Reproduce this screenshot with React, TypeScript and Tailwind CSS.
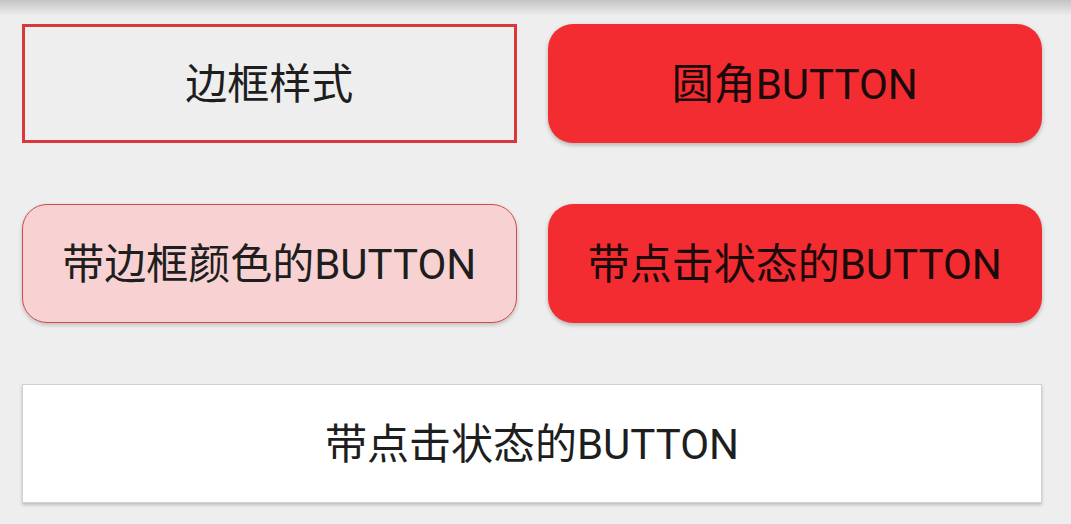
import React from "react";

const font = { fontFamily: 'Roboto, "Noto Sans CJK SC", sans-serif' };

export default function App() {
  return (
    <div
      className="relative w-[1071px] h-[524px] overflow-hidden bg-[#eeeeee] text-[#1e1e1e]"
      style={font}
    >
      <div className="absolute left-0 top-0 w-full h-[16px] bg-gradient-to-b from-[#c4c4c4] to-[#eeeeee]" />
      <div className="relative grid grid-cols-2 gap-x-[31px] gap-y-[61px] pl-[22px] pr-[29px] pt-[24px]">
        <div className="h-[119px] flex items-center justify-center border-[3px] border-[#d9383a] text-[42px] leading-none pt-[2px]">
          边框样式
        </div>
        <div className="h-[119px] flex items-center justify-center rounded-[25px] bg-[#f22c30] shadow-[0_2px_4px_rgba(0,0,0,0.25)] text-[42px] leading-none pt-[2px] text-[#1a0a0a]">
          圆角BUTTON
        </div>
        <div className="h-[119px] flex items-center justify-center rounded-[25px] bg-[#f8d2d3] border border-[#cf4a50] shadow-[0_2px_4px_rgba(0,0,0,0.2)] text-[42px] leading-none pt-[2px]">
          带边框颜色的BUTTON
        </div>
        <div className="h-[119px] flex items-center justify-center rounded-[25px] bg-[#f22c30] shadow-[0_2px_4px_rgba(0,0,0,0.25)] text-[42px] leading-none pt-[2px] text-[#1a0a0a]">
          带点击状态的BUTTON
        </div>
        <div className="col-span-2 h-[119px] flex items-center justify-center bg-white border border-[#d0d0d0] shadow-[0_2px_3px_rgba(0,0,0,0.2)] text-[42px] leading-none pt-[2px]">
          带点击状态的BUTTON
        </div>
      </div>
    </div>
  );
}
